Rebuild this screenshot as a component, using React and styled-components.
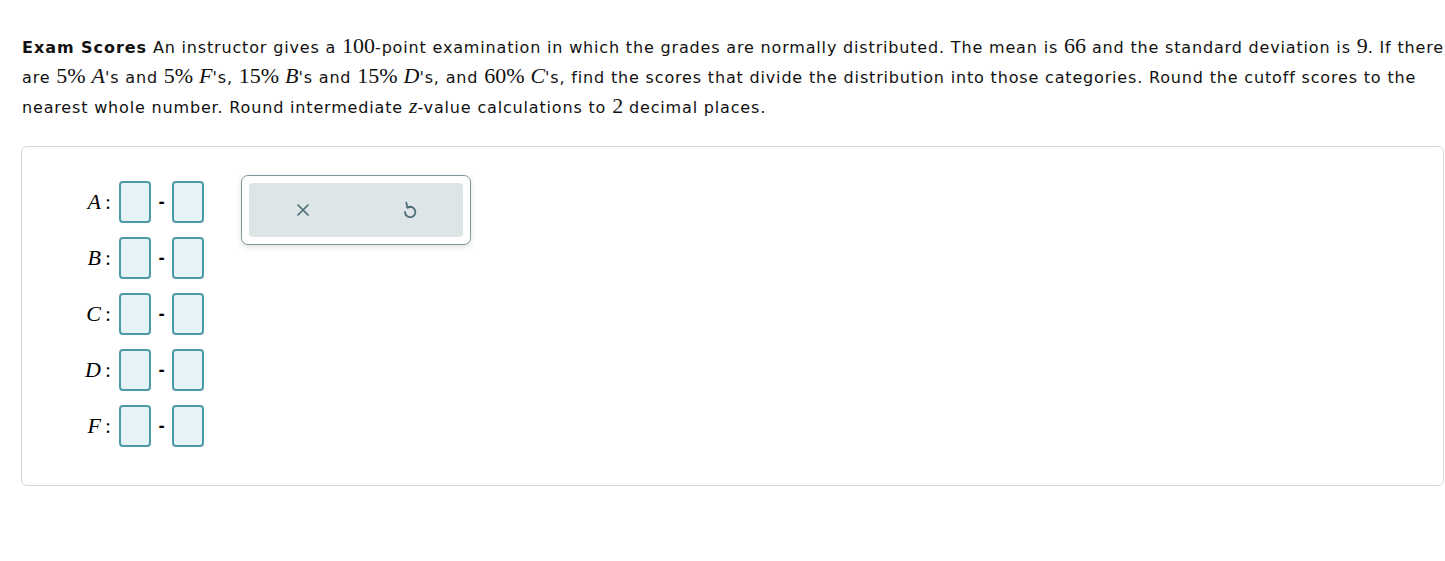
import React from "react";
import styled, { createGlobalStyle } from "styled-components";

const Global = createGlobalStyle`
  html, body { margin: 0; padding: 0; background: #fff; }
  body { font-family: Verdana, "DejaVu Sans", sans-serif; color: #000; }
`;

const Page = styled.div`
  width: 1423px;
  padding: 33px 0 0 21px;
  box-sizing: content-box;
`;

const Prompt = styled.p`
  margin: 0 0 23px 1px;
  font-size: 16px;
  line-height: 30px;
  letter-spacing: 0.83px;
  color: #111;
`;

const Line = styled.span`
  display: block;
  white-space: nowrap;
  height: 30px;
`;

const Strong = styled.b`
  font-weight: bold;
  letter-spacing: 0.95px;
`;

const M = styled.span`
  font-family: "Liberation Serif", "Times New Roman", serif;
  font-size: 22px;
  line-height: 1;
  letter-spacing: 0;
  font-style: ${(p) => (p.$i ? "italic" : "normal")};
`;

const Card = styled.div`
  width: 1423px;
  height: 340px;
  box-sizing: border-box;
  border: 1px solid #cfd9dc;
  border-radius: 6px;
  padding: 34px 0 0 57px;
  display: flex;
  align-items: flex-start;
  gap: 37px;
`;

const Rows = styled.div`
  display: flex;
  flex-direction: column;
  gap: 14px;
`;

const Row = styled.div`
  display: flex;
  align-items: center;
  height: 42px;
`;

const Label = styled.span`
  font-family: "Liberation Serif", "Times New Roman", serif;
  font-style: italic;
  font-size: 22px;
  width: 22px;
  text-align: right;
  padding-right: 4px;
`;

const Colon = styled.span`
  font-family: "Liberation Serif", "Times New Roman", serif;
  font-size: 20px;
  width: 6px;
  text-align: center;
  margin-right: 8px;
`;

const Box = styled.div`
  width: 32px;
  height: 42px;
  box-sizing: border-box;
  border: 2px solid #4a9aa8;
  border-radius: 4px;
  background: #e5f3f7;
`;

const Dash = styled.span`
  width: 21px;
  text-align: center;
  font-size: 15px;
  font-weight: bold;
  font-family: "DejaVu Sans", sans-serif;
  line-height: 1;
`;

const Tools = styled.div`
  margin-top: -6px;
  width: 230px;
  height: 70px;
  box-sizing: border-box;
  border: 1px solid #7d969c;
  border-radius: 7px;
  background: #fff;
  padding: 7px;
  box-shadow: 0 2px 6px rgba(0, 0, 0, 0.12);
`;

const ToolBar = styled.div`
  height: 54px;
  background: #dee5e7;
  border-radius: 4px;
  display: grid;
  grid-template-columns: 1fr 1fr;
  align-items: center;
  justify-items: center;
`;

const IconBtn = styled.div`
  display: flex;
  align-items: center;
  justify-content: center;
  width: 24px;
  height: 24px;
  color: #4d6d77;
`;

const rows = ["A", "B", "C", "D", "F"];

export default function App() {
  return (
    <>
      <Global />
      <Page>
        <Prompt>
          <Line>
            <Strong>Exam Scores</Strong> An instructor gives a <M>100</M>-point examination in which
            the grades are normally distributed. The mean is <M>66</M> and the standard deviation
            is <M>9</M>. If there
          </Line>
          <Line>
            are <M>5%</M> <M $i>A</M>'s and <M>5%</M> <M $i>F</M>'s, <M>15%</M> <M $i>B</M>'s and{" "}
            <M>15%</M> <M $i>D</M>'s, and <M>60%</M> <M $i>C</M>'s, find the scores that divide the
            distribution into those categories. Round the cutoff scores to the
          </Line>
          <Line>
            nearest whole number. Round intermediate <M $i>z</M>-value calculations to <M>2</M>{" "}
            decimal places.
          </Line>
        </Prompt>
        <Card>
          <Rows>
            {rows.map((r) => (
              <Row key={r}>
                <Label>{r}</Label>
                <Colon>:</Colon>
                <Box />
                <Dash>-</Dash>
                <Box />
              </Row>
            ))}
          </Rows>
          <Tools>
            <ToolBar>
              <IconBtn>
                <svg width="16" height="16" viewBox="0 0 16 16" fill="none" stroke="currentColor" strokeWidth="1.7">
                  <path d="M2.5 2.5 L13.5 13.5 M13.5 2.5 L2.5 13.5" />
                </svg>
              </IconBtn>
              <IconBtn>
                <svg width="20" height="22" viewBox="0 0 20 22" fill="none" stroke="currentColor" strokeWidth="1.8" strokeLinecap="round" strokeLinejoin="round">
                  <path d="M7.4 8.6 A5.2 5.2 0 1 1 5 13" />
                  <path d="M6.3 3.6 L7.4 8.6 L11.2 7.9" />
                </svg>
              </IconBtn>
            </ToolBar>
          </Tools>
        </Card>
      </Page>
    </>
  );
}
